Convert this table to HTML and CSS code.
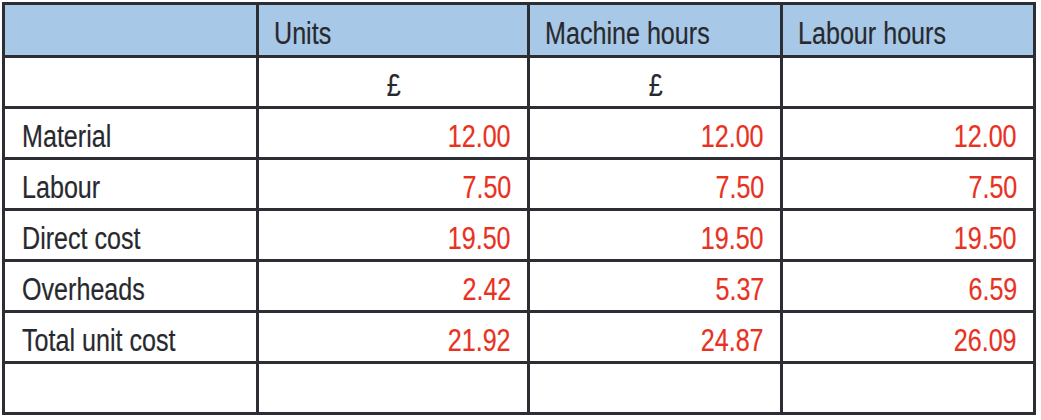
FILE: index.html
```html
<!DOCTYPE html>
<html>
<head>
<meta charset="utf-8">
<link rel="stylesheet" href="styles.css">
</head>
<body>
<table class="cost">
  <colgroup>
    <col class="c1"><col class="c2"><col class="c3"><col class="c4">
  </colgroup>
  <thead>
    <tr class="head">
      <th></th><th><span class="t">Units</span></th><th><span class="t">Machine hours</span></th><th><span class="t">Labour hours</span></th>
    </tr>
  </thead>
  <tbody>
    <tr class="unit"><td></td><td><span class="t">£</span></td><td><span class="t">£</span></td><td></td></tr>
    <tr><td class="lbl"><span class="t">Material</span></td><td class="num"><span class="t">12.00</span></td><td class="num"><span class="t">12.00</span></td><td class="num"><span class="t">12.00</span></td></tr>
    <tr><td class="lbl"><span class="t">Labour</span></td><td class="num"><span class="t">7.50</span></td><td class="num"><span class="t">7.50</span></td><td class="num"><span class="t">7.50</span></td></tr>
    <tr><td class="lbl"><span class="t">Direct cost</span></td><td class="num"><span class="t">19.50</span></td><td class="num"><span class="t">19.50</span></td><td class="num"><span class="t">19.50</span></td></tr>
    <tr><td class="lbl"><span class="t">Overheads</span></td><td class="num"><span class="t">2.42</span></td><td class="num"><span class="t">5.37</span></td><td class="num"><span class="t">6.59</span></td></tr>
    <tr><td class="lbl"><span class="t">Total unit cost</span></td><td class="num"><span class="t">21.92</span></td><td class="num"><span class="t">24.87</span></td><td class="num"><span class="t">26.09</span></td></tr>
    <tr><td></td><td></td><td></td><td></td></tr>
  </tbody>
</table>
</body>
</html>
```
FILE: styles.css
```css
html, body {
  margin: 0;
  padding: 0;
  background: #ffffff;
}
body {
  padding: 2px;
  font-family: "Liberation Sans", Arial, sans-serif;
}
.cost {
  border-collapse: collapse;
  table-layout: fixed;
  width: 1034px;
  font-size: 31px;
  color: #28292e;
}
.c1 { width: 254px; }
.c2 { width: 271px; }
.c3 { width: 253px; }
.c4 { width: 253px; }
.cost th, .cost td {
  border: 3px solid #2c2e34;
  height: 48px;
  padding: 8px 16px 0 17px;
  line-height: 40px;
  box-sizing: border-box;
  white-space: nowrap;
  overflow: visible;
}
.cost tr { height: 51px; }
.cost .head { height: 53px; }
.cost th {
  background: #a8c8e7;
  font-weight: normal;
  text-align: left;
  padding-left: 15px;
}
.t {
  display: inline-block;
  transform: scaleX(0.81);
  transform-origin: left center;
  -webkit-text-stroke: 0.2px currentColor;
}
.unit td { text-align: center; }
.unit .t { transform-origin: center center; }
.num {
  text-align: right;
  color: #e8321f;
}
.num .t { transform-origin: right center; }
.lbl { text-align: left; }
```
